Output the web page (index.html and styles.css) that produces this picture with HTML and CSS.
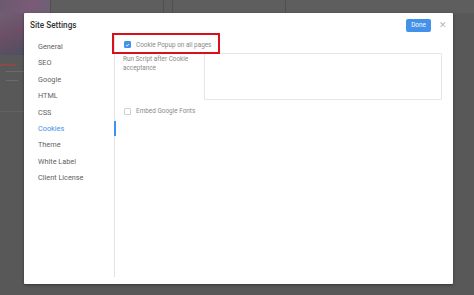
FILE: index.html
```html
<!DOCTYPE html>
<html lang="en">
<head>
  <meta charset="UTF-8" />
  <meta name="viewport" content="width=device-width, initial-scale=1" />
  <title>Site Settings</title>
  <link rel="stylesheet" href="styles.css">
</head>
<body>
  <!-- page behind the modal -->
  <div class="page">
    <div class="topbar">
      <div class="seg seg-a"></div>
      <div class="seg seg-b"></div>
      <div class="seg seg-c"></div>
      <div class="seg seg-d"></div>
      <div class="seg seg-e"></div>
    </div>
    <div class="hero"></div>
    <div class="hero-title"></div>
    <div class="hero-line"></div>
    <div class="hero-line short"></div>
    <div class="hero-rule"></div>
  </div>

  <div class="overlay">
    <div class="dialog">
      <div class="dialog-header">
        <h1>Site Settings</h1>
        <div class="header-actions">
          <button class="done-button">Done</button>
          <span class="close">&#x2715;</span>
        </div>
      </div>

      <div class="dialog-body">
        <ul class="sidebar">
          <li>General</li>
          <li>SEO</li>
          <li>Google</li>
          <li>HTML</li>
          <li>CSS</li>
          <li class="active">Cookies</li>
          <li>Theme</li>
          <li>White Label</li>
          <li>Client License</li>
        </ul>

        <div class="settings">
          <div class="check-row highlighted">
            <span class="box checked">
              <svg viewBox="0 0 10 10" width="6" height="6"><path d="M2 5.2 L4.1 7.2 L8 2.8" fill="none" stroke="#fff" stroke-width="1.6"/></svg>
            </span>
            <span>Cookie Popup on all pages</span>
          </div>

          <div class="field-row">
            <label for="script">Run Script after Cookie acceptance</label>
            <textarea id="script"></textarea>
          </div>

          <div class="check-row">
            <span class="box"></span>
            <span>Embed Google Fonts</span>
          </div>
        </div>
      </div>
    </div>
  </div>
</body>
</html>
```

FILE: styles.css
```css
:root {
  --accent: #4491ea;
  --line: #e3e3e3;
  --text: #626262;
  --muted: #8a8a8a;
}

html, body {
  margin: 0;
  width: 474px;
  height: 295px;
  overflow: hidden;
}

body {
  background: #585858;
  font-family: Roboto, "Liberation Sans", sans-serif;
  position: relative;
}

/* faded page behind the overlay */
.page {
  height: 100%;
}

.topbar {
  display: flex;
  height: 13px;
  background: #5e5e5e;
}

.seg {
  border-right: 1px solid #505050;
}
.seg-a { width: 50px; background: linear-gradient(120deg, #6a5a6e, #7a5a78 60%, #6b6276); }
.seg-b { width: 112px; }
.seg-c { width: 8px; }
.seg-d { width: 112px; }
.seg-e { flex: 1; border-right: none; }

.hero {
  width: 24px;
  height: 42px;
  background: linear-gradient(160deg, #6e5f74, #6c4f66 50%, #4e4f60);
}

.hero-title {
  width: 15px;
  height: 2px;
  margin-top: 9px;
  background: #8a4a4a;
}

.hero-line {
  width: 20px;
  height: 1px;
  margin: 5px 0 0 6px;
  background: #6a6a6a;
}

.hero-line.short {
  width: 12px;
  margin-top: 8px;
}

.hero-rule {
  width: 24px;
  height: 1px;
  margin-top: 30px;
  background: #626262;
}

/* modal */
.overlay {
  position: absolute;
  inset: 0;
  padding: 13px 21px 11px 24px;
  box-sizing: border-box;
}

.dialog {
  background: #fff;
  height: 100%;
  display: flex;
  flex-direction: column;
  box-shadow: 0 1px 3px rgba(0,0,0,0.4);
  border-radius: 1px;
}

.dialog-header {
  display: flex;
  align-items: center;
  justify-content: space-between;
  height: 22px;
  padding: 0 6px 0 6px;
  margin-top: 1px;
}

.dialog-header h1 {
  margin: 0;
  font-size: 8.2px;
  font-weight: 500;
  color: #333;
}

.header-actions {
  display: flex;
  align-items: center;
  gap: 8px;
}

.done-button {
  background: var(--accent);
  color: #fff;
  border: none;
  border-radius: 2px;
  font-family: inherit;
  font-size: 6.3px;
  width: 25px;
  height: 13px;
  padding: 0;
}

.close {
  color: #b5b5b5;
  font-size: 9px;
  line-height: 1;
  width: 8px;
}

.dialog-body {
  flex: 1;
  display: flex;
  padding-bottom: 7px;
}

.sidebar {
  list-style: none;
  margin: 0;
  padding: 3px 0 0 0;
  width: 90px;
  border-right: 1px solid var(--line);
}

.sidebar li {
  font-size: 7.3px;
  color: var(--text);
  height: 16.4px;
  line-height: 16.4px;
  padding-left: 14px;
  position: relative;
}

.sidebar li.active {
  color: var(--accent);
}

.sidebar li.active::after {
  content: "";
  position: absolute;
  right: -1.5px;
  top: 0;
  width: 1.5px;
  height: 15px;
  background: var(--accent);
}

.settings {
  flex: 1;
  padding: 0 11px 0 8px;
  font-size: 6.4px;
  color: var(--muted);
}

.check-row {
  display: flex;
  align-items: center;
  gap: 5px;
  height: 10px;
  padding-left: 1px;
}

.check-row.highlighted {
  position: relative;
  margin-top: 3.5px;
}

.check-row.highlighted::before {
  content: "";
  position: absolute;
  left: -11px;
  top: -6.5px;
  width: 104px;
  height: 17px;
  border: 2px solid #d8101c;
}

.box {
  width: 5px;
  height: 5px;
  border: 0.8px solid #cfcfcf;
  border-radius: 1px;
  display: flex;
  align-items: center;
  justify-content: center;
}

.box.checked {
  background: var(--accent);
  border-color: var(--accent);
}

.field-row {
  display: flex;
  gap: 8px;
  margin-top: 3.5px;
}

.field-row label {
  width: 73px;
  line-height: 9px;
  padding-top: 1.5px;
}

.field-row textarea {
  flex: 1;
  height: 47px;
  box-sizing: border-box;
  border: 1.5px solid #e6e6e6;
  border-radius: 1px;
  resize: none;
  margin: 0;
}

.field-row + .check-row {
  margin-top: 6px;
}
```
